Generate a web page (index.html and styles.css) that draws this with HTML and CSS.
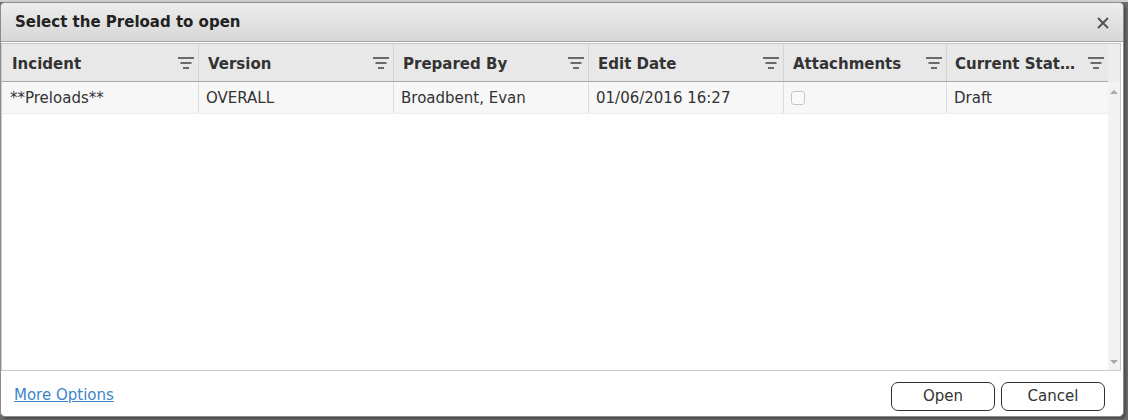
FILE: index.html
```html
<!DOCTYPE html>
<html>
<head>
<meta charset="utf-8">
<link rel="stylesheet" href="styles.css">
</head>
<body>
<div class="backdrop-top"></div>
<div class="dialog">
  <div class="titlebar">
    <span class="title">Select the Preload to open</span>
    <svg class="close" width="14" height="14" viewBox="0 0 14 14"><path d="M2 2 L12 12 M12 2 L2 12" stroke="#555" stroke-width="2" fill="none"/></svg>
  </div>
  <div class="grid">
    <div class="grid-main">
      <div class="head">
        <div class="hcell c1"><span class="htext">Incident</span><svg class="filter" width="16" height="12" viewBox="0 0 16 12"><rect x="0" y="0" width="16" height="2" fill="#6a6a6a"/><rect x="2.5" y="5" width="11" height="2" fill="#6a6a6a"/><rect x="5" y="10" width="6" height="2" fill="#6a6a6a"/></svg></div>
        <div class="hcell c2"><span class="htext">Version</span><svg class="filter" width="16" height="12" viewBox="0 0 16 12"><rect x="0" y="0" width="16" height="2" fill="#6a6a6a"/><rect x="2.5" y="5" width="11" height="2" fill="#6a6a6a"/><rect x="5" y="10" width="6" height="2" fill="#6a6a6a"/></svg></div>
        <div class="hcell c3"><span class="htext">Prepared By</span><svg class="filter" width="16" height="12" viewBox="0 0 16 12"><rect x="0" y="0" width="16" height="2" fill="#6a6a6a"/><rect x="2.5" y="5" width="11" height="2" fill="#6a6a6a"/><rect x="5" y="10" width="6" height="2" fill="#6a6a6a"/></svg></div>
        <div class="hcell c4"><span class="htext">Edit Date</span><svg class="filter" width="16" height="12" viewBox="0 0 16 12"><rect x="0" y="0" width="16" height="2" fill="#6a6a6a"/><rect x="2.5" y="5" width="11" height="2" fill="#6a6a6a"/><rect x="5" y="10" width="6" height="2" fill="#6a6a6a"/></svg></div>
        <div class="hcell c5"><span class="htext">Attachments</span><svg class="filter" width="16" height="12" viewBox="0 0 16 12"><rect x="0" y="0" width="16" height="2" fill="#6a6a6a"/><rect x="2.5" y="5" width="11" height="2" fill="#6a6a6a"/><rect x="5" y="10" width="6" height="2" fill="#6a6a6a"/></svg></div>
        <div class="hcell c6 last"><span class="htext">Current Status</span><svg class="filter" width="16" height="12" viewBox="0 0 16 12"><rect x="0" y="0" width="16" height="2" fill="#6a6a6a"/><rect x="2.5" y="5" width="11" height="2" fill="#6a6a6a"/><rect x="5" y="10" width="6" height="2" fill="#6a6a6a"/></svg></div>
      </div>
      <div class="body">
        <div class="row">
          <div class="cell c1">**Preloads**</div>
          <div class="cell c2">OVERALL</div>
          <div class="cell c3">Broadbent, Evan</div>
          <div class="cell c4">01/06/2016 16:27</div>
          <div class="cell c5"><span class="checkbox"></span></div>
          <div class="cell c6 last">Draft</div>
        </div>
      </div>
    </div>
    <div class="scrollbar">
      <div class="sb-head"></div>
      <div class="sb-track">
        <span class="arrow up"></span>
        <span class="arrow down"></span>
      </div>
    </div>
  </div>
  <div class="footer">
    <a class="more" href="#">More Options</a>
    <div class="buttons">
      <button class="btn">Open</button>
      <button class="btn">Cancel</button>
    </div>
  </div>
</div>
</body>
</html>
```

FILE: styles.css
```css
html, body {
  margin: 0;
  padding: 0;
}
body {
  background: #6f6f6f;
  width: 1128px;
  height: 420px;
  overflow: hidden;
  font-family: "DejaVu Sans", Verdana, sans-serif;
  font-size: 15px;
  color: #333;
}
.backdrop-top {
  height: 2px;
  background: #cfcfcf;
}
.dialog {
  width: 1124px;
  height: 415px;
  box-sizing: border-box;
  border: 1px solid #8c8c8c;
  border-radius: 5px;
  background: #fff;
  display: flex;
  flex-direction: column;
  overflow: hidden;
  box-shadow: 2px 2px 3px rgba(0,0,0,0.35);
}
.titlebar {
  height: 39px;
  flex: none;
  box-sizing: border-box;
  background: linear-gradient(#ededed, #d7d7d7);
  border-bottom: 1px solid #a3a3a3;
  display: flex;
  align-items: center;
  justify-content: space-between;
  padding: 0 13px 0 14px;
}
.title {
  font-weight: bold;
  color: #222;
  font-size: 15px;
}
.close {
  display: block;
  margin-top: 2px;
}
.grid {
  margin: 1px 2px 0 0;
  height: 328px;
  flex: none;
  box-sizing: border-box;
  border: 1px solid #c9c9c9;
  display: flex;
}
.grid-main {
  flex: 1;
  display: flex;
  flex-direction: column;
  min-width: 0;
}
.head {
  display: flex;
  height: 38px;
  box-sizing: border-box;
  background: #e8e8e8;
  border-bottom: 1px solid #a9a9a9;
}
.hcell {
  box-sizing: border-box;
  border-right: 1px solid #d4d4d4;
  display: flex;
  align-items: center;
  padding: 2px 4px 0 10px;
  font-weight: bold;
  color: #333;
  gap: 6px;
}
.htext {
  flex: 1;
  white-space: nowrap;
  overflow: hidden;
  text-overflow: ellipsis;
}
.c6 .htext {
  flex: none;
  width: 122px;
}
.c6 .filter {
  margin-left: auto;
}
.filter {
  flex: none;
  display: block;
  margin-top: -1px;
}
.c1 { width: 197px; }
.c2 { width: 195px; padding-left: 9px; }
.c3 { width: 195px; padding-left: 9px; }
.c4 { width: 195px; padding-left: 9px; }
.c5 { width: 163px; padding-left: 9px; }
.c6 { flex: 1; padding-left: 8px; }
.hcell.last { border-right: none; }
.body {
  flex: 1;
  background: #fff;
}
.row {
  display: flex;
  height: 32px;
  box-sizing: border-box;
  background: #f7f7f7;
  border-bottom: 1px solid #ececec;
}
.cell {
  box-sizing: border-box;
  border-right: 1px solid #dcdcdc;
  display: flex;
  align-items: center;
  padding-left: 7px;
  white-space: nowrap;
  color: #333;
}
.cell.c1 { padding-left: 8px; }
.cell.c2, .cell.c3, .cell.c4, .cell.c5 { padding-left: 7px; }
.cell.c6 { padding-left: 7px; }
.cell.last { border-right: none; }
.checkbox {
  width: 14px;
  height: 14px;
  box-sizing: border-box;
  border: 1px solid #c6c6c6;
  border-radius: 3px;
  background: #fafafa;
  margin-top: 1px;
}
.scrollbar {
  width: 12px;
  flex: none;
  display: flex;
  flex-direction: column;
  background: #f2f2f2;
}
.sb-head {
  height: 38px;
  background: #ededed;
}
.sb-track {
  flex: 1;
  display: flex;
  flex-direction: column;
  justify-content: space-between;
  align-items: center;
  padding: 8px 0 6px;
}
.arrow {
  width: 0;
  height: 0;
  border-left: 4px solid transparent;
  border-right: 4px solid transparent;
}
.arrow.up { border-bottom: 4px solid #a8a8a8; }
.arrow.down { border-top: 4px solid #a8a8a8; }
.footer {
  flex: 1;
  display: flex;
  align-items: center;
  justify-content: space-between;
  padding: 0 18px 0 13px;
}
.more {
  color: #3d86c9;
  text-decoration: underline;
  font-size: 15px;
  margin-top: 3px;
}
.buttons {
  display: flex;
  gap: 6px;
  margin-top: 5px;
}
.btn {
  width: 104px;
  height: 29px;
  box-sizing: border-box;
  border: 1px solid #2e2e2e;
  border-radius: 7px;
  background: #fff;
  font-family: "DejaVu Sans", Verdana, sans-serif;
  font-size: 15px;
  color: #333;
  padding: 0 0 0 0;
}
```
